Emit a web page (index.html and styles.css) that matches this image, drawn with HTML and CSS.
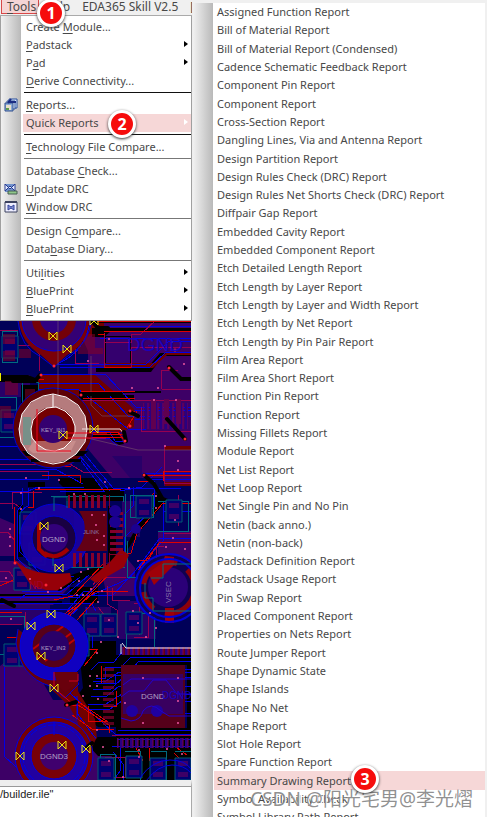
FILE: index.html
```html
<!DOCTYPE html>
<html lang="en">
<head>
<meta charset="utf-8">
<title>Quick Reports</title>
<meta name="viewport" content="width=device-width, initial-scale=1">
<link rel="stylesheet" href="styles.css">
</head>
<body>
<div class="app">
  <div class="workspace">
    <nav class="menubar">
      <button class="menubar-item open"><u>T</u>ools</button>
      <button class="menubar-item"><u>H</u>elp</button>
      <button class="menubar-item">EDA365 Skill V2.5</button>
      <span class="menubar-item">[ C</span>
    </nav>
    <div class="menu tools-menu">
      <button class="item">Create <u>M</u>odule...</button>
      <button class="item sub"><u>P</u>adstack</button>
      <button class="item sub">P<u>a</u>d</button>
      <button class="item"><u>D</u>erive Connectivity...</button>
      <hr>
      <button class="item"><svg class="icon" viewBox="0 0 14 14"><path d="M5 1h8v9H5z" fill="#dbe8fa" stroke="#294f9c"/><path d="M3 3h8v8H3z" fill="#eef4fd" stroke="#294f9c"/><path d="M1 5h8v8H1z" fill="#8ba9d6" stroke="#31518f"/><path d="M2 7h5v5H2z" fill="#e8e0c8"/><path d="M2 10h3v2H2z" fill="#5b9c4c"/><path d="M4 4h8M4 5l3-4" stroke="#1a2c83" stroke-width="2"/></svg><u>R</u>eports...</button>
      <button class="item sub selected">Quick Reports</button>
      <hr>
      <button class="item"><u>T</u>echnology File Compare...</button>
      <hr class="soft">
      <button class="item">Database <u>C</u>heck...</button>
      <button class="item"><svg class="icon" viewBox="0 0 14 14"><path d="M1 2h10v8H1z" fill="#6f90cc"/><path d="M1 2v7l5-5 5 5V2L6 7z" fill="#e4ebff" stroke="#283b90"/><path d="M4 9h9v3H4z" fill="#8fc78a" stroke="#475c52"/></svg><u>U</u>pdate DRC</button>
      <button class="item"><svg class="icon" viewBox="0 0 14 14"><path d="M1 2h12v10H1z" fill="#eef" stroke="#3c4260"/><path d="M1 2h12" stroke="#3c4260" stroke-width="2"/><path d="M4 5v5l3-2 3 2V5L7 7z" fill="#8491d4" stroke="#33439b"/></svg><u>W</u>indow DRC</button>
      <hr class="soft">
      <button class="item">Design C<u>o</u>mpare...</button>
      <button class="item">Data<u>b</u>ase Diary...</button>
      <hr class="soft">
      <button class="item sub">Uti<u>l</u>ities</button>
      <button class="item sub"><u>B</u>luePrint</button>
      <button class="item sub"><u>B</u>luePrint</button>
    </div>
    <svg class="board" viewBox="0 320 191 460" preserveAspectRatio="xMinYMin slice" role="img" aria-label="Circuit board">
      <defs>
        <g id="tie"><path d="M-4-4v8L4-4v8z" fill="none" stroke="#e8e010"/></g>
        <g id="part"><path d="M-8-11H8V11H-8z" fill="#000070" stroke="#005a70"/><path d="M-5-8H5v5H-5zM-5 3H5v5H-5z" fill="#3d0066"/></g>
        <pattern id="pins" width="6" height="13" patternUnits="userSpaceOnUse"><path d="M1 0h3v13H1z" fill="#84002c"/></pattern>
        <pattern id="pinsH" width="12" height="6" patternUnits="userSpaceOnUse"><path d="M0 1h12v3H0z" fill="#84002c"/></pattern>
        <pattern id="comb" width="5" height="9" patternUnits="userSpaceOnUse"><path d="M0 0h3v9H0z" fill="#2a0080"/><path d="M3 0v9" stroke="#80004c"/></pattern>
      </defs>
      <path fill="#000058" d="M0 320h191v460H0z"/>

      <g class="copper">
        <path fill="#3d0066" d="M75 320h116v165h-27v-8h-52L88 448V350zM0 517l14 6v32H0zM0 560h20l35 22h18l-20 22H0zM0 665l8-6 16 3 18 18 11 19h20l8 18 14 21 14 12 6 13v17H0zM158 530h33v32h-22l-11-9zM100 565l25-10 10 12v28h-28z"/>
        <path fill="#280068" d="M0 374h30v22H0zM112 455h30v22h-12zM122 500h18v36h-18zM0 604h50v20H0zM85 606h26v30H85zM118 600h38v38h-38z"/>
        <path fill="#700000" d="M38 374h57l39 34v18l-13 5-29-2-9 20-20 15H38zM165 445h26v4h-26zM165 481h26v4h-26zM84 322h20v10h-8l-8 4z"/>
        <path fill="#000" d="M90 320h101v2H90zM92 327h99v3h-80l-7 6H92zM104 335h27v28h-27v-24zM96 366h52l12-14h31v3h-28l-12 16H96zM0 374h28l10 4v3H0zM79 390h82v2H79zM79 394h55v6H79zM21 384h17v20H21zM84 431h34l6 12-5 1-11-7H84zM59 477h36l9 16H70l-11-11zM28 481h17v5H28zM18 504h5v52h-5zM66 487h58v13H66zM70 510h4v40h-4zM108 505h8v56h-8zM154 492l14 6-28 32-24 36-29 10-28 14-12-7 30-11 40-12 12-20zM70 586h28v16H70zM0 593h62v2H0zM0 600h62v3H0zM78 640h38v86H98L70 705l13-18zM116 654h75v10h-70v63h70v28H98l-12-13 12-6h18zM187 664h4v63h-4zM112 754h79v26h-79z"/>
        <path fill="#34006e" d="M106 336h24v27h-24z"/>
        <path fill="#700000" d="M105 362h48l13-10h25v2h-24l-14 13h-48zM64 676h14v14l17 28 2 20-18-15-10-18-19-18z"/>
      </g>

      <g fill="none" stroke="#0000e8" shape-rendering="crispEdges">
        <path d="M90 320q-4 31-33 43h89l23-23h22M38 373h67l31 33h55M38 382h60l30 33h63M38 388h40l50 40h18M60 366h90l16-15h25M135 409h56M135 418h32l20 20M74 430h35l6 10h8M78 437h31l8 8M82 450l31 37h68M76 453l28 37H60M0 445h32l6 10h42l30 35M0 478h48v-7M0 490h28l10-4h46M104 325h87M100 337h91M142 472h49M148 478h43"/>
        <path d="M28 487v18q-9 4-9 15v30l24 25h31M22 487v17l-5 6v47l20 20M120 490l22-4 20-20M164 510h27M154 480v26l-30 31v17l-37 40M163 500v40l-50 54H70M0 602h91l5 8M0 608h78l-24 21M93 590h-9l-17 20M0 596h80M90 595l40-18 30-40h31M137 577v20l10 7M164 600h27M20 598l6-5h41l22-19M22 590h40l18-14M133 486v19l-9 9v13M86 606v12l6 12v17M0 468h55l28 15M0 458h36l9 6"/>
        <path d="M191 650h-68l-9 11h-15l-8 8M191 656h-60l-10 10h-16v11H96M191 660h-52l-12 14h-12v8h-19M191 668h-60l-13 14M93 680h13l13-9h72M93 688h18l12-12h68M91 695h16l12-10h72M88 703h18l16-10h69M90 708h20l12-8h69M70 692l45 41h76M118 729h73M118 738h73M3 664h1l1 92 27 24M77 700v12l19 26M122 712h69M112 745h79M113 751l10 12v17M120 742v28l-7 10"/>
      </g>

      <g fill="none" stroke="#960050" shape-rendering="crispEdges">
        <path d="M104 332v34h27v-20h60M104 341h27v-8h10l16-15M75 346v16h24M80 399h111M161 388v-19h17M141 406v24h50M162 388h29M164 445v37h27M0 463h70l13 8h29M0 470h49M18 329H0M39 370v-17l-8-9H16M0 502h14l5 4M12 508v-17h30M164 532h27M164 545h-8v12M0 531h8l6 8v22M18 587h10l-4-12h-8M0 570h9l6 9M93 584l6-8h27M98 606l7 9h-15l-5 10M107 585v18l10 6v26M134 602h14v34h-14M139 606v28M0 623h22M25 611v20M112 734h79M105 756h20v20h-20M100 760v20M178 494v31M167 566h24M190 559h-18M0 580h31M112 587v12h18"/>
      </g>
      <g fill="none" stroke="#df0000" shape-rendering="crispEdges">
        <path d="M97 320h94M104 330h87M98 333h7M104 366h27M81 394v-4h54M83 397h52M36 378h8M60 436h64M69 431h49l6 8M37 458l20 7h14M42 474h38v8M35 488h86M33 490v16h-5M14 506v55M92 433h31M137 410l-10 17M135 410h-7M144 474h47M151 480h-13M163 480v-10h28M121 552h10l6-20 26-30h28M138 559h10l5-8M128 552l-25 25-29 29-33 24M112 570l-54 57M103 563l-30 32-19 4M60 620l36-30h32M66 631l31-34M77 666h-8v17M83 648h15l-14 17M66 704h12l31 20v8M72 714l20 14h22M101 665v17M136 747l7 13M149 747v13M177 747l10 7M174 752l8 8"/>
        <path d="M16 560l22 27M0 611h22M7 636h27l7 9M0 585l22-10M88 705v15h19M116 690v15h-12M77 700l31 21M80 660l-13 20M146 500l8-8M191 541h-31l-22 28"/>
      </g>
      <g fill="none" stroke="#006a80" shape-rendering="crispEdges">
        <path d="M2 330h15v31H2zM22 381v55h16v-55zM0 396h16v40H0M125 493v68M51 566h74M51 495h72v6M130 494h23v22h-23zM127 540v36h20M126 612h28v36h-28zM100 753h15v27h-15zM125 750h15v30M151 750h15v30M175 750h16v30M0 615h24v38H0M158 500h30v30h-30"/>
      </g>
      <use href="#part" x="10" y="346"/><use href="#part" x="9" y="420"/>
      <use href="#part" x="28" y="522"/><use href="#part" x="37" y="553"/><use href="#part" x="144" y="506"/><use href="#part" x="174" y="510"/><use href="#part" x="22" y="578"/><use href="#part" x="92" y="624"/><use href="#part" x="109" y="624"/><use href="#part" x="134" y="622"/><use href="#part" x="12" y="654"/><use href="#part" x="27" y="654"/><use href="#part" x="81" y="644"/><use href="#part" x="106" y="768"/><use href="#part" x="134" y="766"/><use href="#part" x="158" y="768"/><use href="#part" x="183" y="768"/>

      <g fill="#850022"><path d="M3 333h12v10H3zM3 350h12v10H3zM83 333h12v14h8v6H78v-11h5zM19 348h12v9H19zM5 380h13v14H5zM25 388h10v10H25zM0 405h11v12H0z" opacity=".55"/><path d="M143 402h45v26h-45z" fill="url(#comb)"/><path d="M151 398h5v30h-5zM164 398h5v25h-5zM176 398h5v25h-5z" fill="#600050"/></g>

      <path d="M19 320h70q-2 24-22 34l-13 12-13-12q-20-12-22-34z" fill="#7a0008"/><circle cx="54" cy="318" r="32" fill="#340074"/><circle cx="54" cy="318" r="22" fill="#740008"/><circle cx="54" cy="318" r="14" fill="#300080"/>
      <g fill="none" stroke="#0000d8"><circle cx="54" cy="318" r="32"/><path d="M18 320q2 26 23 36l13 10 15-12q18-10 23-34"/></g>
      <circle cx="53" cy="427" r="40" fill="#5d0005" stroke="#0000cc"/>
      <path d="M22 450h66l-5 5H26zM31 458h50v3H31z" fill="#000"/>
      <path d="M58 320v110M91 355v49l11 11h34M58 430l80 19h53" fill="none" stroke="#77516c" opacity=".6"/>
      <circle cx="53" cy="428" r="22" fill="#740002"/>
      <circle cx="53" cy="428" r="28" fill="none" stroke="#b57b7d" stroke-width="12"/>
      <path d="M23 416h8v28h-8z" fill="#779089"/><path d="M28 448l6-8h42l-6 12H33z" fill="#d69a96" opacity=".6"/>
      <path d="M19 428l3-15 9-12 12-6 10-2 13 3 12 8 7 11 2 13-2 13-9 12-12 8-11 2-13-3-12-8-7-11zM31 428l2-9 6-7 8-5 9-1 9 4 7 7 3 8v6l-4 9-7 7-9 3-9-1-8-5-6-7zM53 393v13" fill="none" stroke="#fff"/>
      <circle cx="53" cy="428" r="14" fill="#350070"/><path d="M37 408v42h34M66 432h41M66 437h40" fill="none" stroke="#f00018"/>
      <path d="M82 428h38l5 6" fill="none" stroke="#f0dddd"/>

      <path d="M14 558q16 18 56 14l2 8-14 9H46L30 583zM121 548l8 6-5 12-28 16-6-4 20-17z" fill="#960008"/>
      <circle cx="54" cy="537" r="22" fill="#190042"/><path d="M39 522v26l8 8M44 552q12 8 24-4M40 535h8" fill="none" stroke="#a10000" stroke-width="4"/><circle cx="54" cy="537" r="14" fill="#32007a"/><circle cx="54" cy="537" r="28" fill="none" stroke="#1b00a2" stroke-width="12" opacity=".92"/><g fill="none" stroke="#0000d8"><circle cx="54" cy="537" r="34"/><circle cx="54" cy="537" r="22"/></g>
      <path d="M79 510h28v40H76q16-20 3-40z" fill="#630015"/>
      <path d="M68 494h42v13H68zM72 552h38v14H72z" fill="url(#pins)"/><path d="M110 511h13v43h-13z" fill="url(#pinsH)"/>
      <path d="M54 510v-14h13v11M53 565v-8" stroke="#006a80" fill="none"/>
      <g fill="#1b0090"><circle cx="115" cy="510" r="6"/><circle cx="115" cy="521" r="6"/><circle cx="136" cy="528" r="5"/></g>

      <circle cx="169" cy="587" r="33" fill="#100050"/><circle cx="169" cy="587" r="26" fill="none" stroke="#8c000b" stroke-width="6" stroke-dasharray="45 12 20 8"/><circle cx="168" cy="586" r="20" fill="#2b0078"/><path d="M148 572l14-10 3-7 9 1v8l-20 20zM165 607h9v15h-9z" fill="#a00008"/><g fill="none" stroke="#0000d8" stroke-width="2"><circle cx="169" cy="587" r="34"/><circle cx="169" cy="587" r="29"/></g>
      <path d="M145 582v15h8v13h38M151 577h12v-14h28" stroke="#007080" fill="none"/>

      <path d="M18 628l-2 14q4 34 34 43l15 12 14-14-8-12" fill="#65000b" stroke="#0000d8"/><circle cx="54" cy="645" r="22" fill="#56001a"/><path d="M34 660l40-30M33 648l36-27M45 660l36-26" stroke="#c00000" stroke-width="2"/><circle cx="54" cy="645" r="15" fill="#2a0068"/><circle cx="54" cy="645" r="28" fill="none" stroke="#1000c0" stroke-width="12"/><g fill="none" stroke="#0000e8"><circle cx="54" cy="645" r="34"/><circle cx="54" cy="645" r="22"/></g>
      <path d="M54 671h24v11l-13 9-7-6" fill="#69000c"/><path d="M69 680h9v-7M54 671v16l20 17" fill="none" stroke="#d00020"/>

      <circle cx="54" cy="755" r="39" fill="#740004"/><path d="M78 718l18 20-7 14-12-5z" fill="#740004"/><circle cx="54" cy="755" r="34" fill="#2200a0"/><circle cx="54" cy="755" r="23" fill="#780007"/><circle cx="54" cy="755" r="14" fill="#40006e"/><g fill="none" stroke="#0000e5"><circle cx="54" cy="755" r="39"/><circle cx="54" cy="755" r="34"/><circle cx="54" cy="755" r="31" stroke-dasharray="8 2"/><circle cx="54" cy="755" r="23"/><path d="M54 721v13M77 695v24"/></g>

      <path d="M121 664h64v63h-64z" fill="#55001a"/><path d="M123 673h60v40h-60z" fill="#39005f"/><circle cx="132" cy="710" r="6" fill="#2000a0"/><circle cx="157" cy="710" r="6" fill="#2000a0"/><path d="M121 696l8-6h15l9-11h13l11 14h14M121 717l10 3q10-1 12-10 8-10 18 0l8 5h22M123 684l8-6h60" fill="none" stroke="#2200cf"/>
      <path d="M122 646h69v8h-69z" fill="#650012"/><path d="M122 646h69v8h-69zM117 737h74v10h-74z" fill="url(#comb)"/><path d="M103 664h11v63h-11z" fill="url(#pinsH)" opacity=".7"/>
      <path d="M121 643v10M122 642l4 5h65" fill="none" stroke="#eee"/>
      <path d="M140 777q12-18 30-18 15 0 21 9M146 780q12-16 26-16 12 0 19 8" fill="none" stroke="#0000e0"/>

      <g fill="none" stroke="#000" stroke-width="4" stroke-linecap="round"><path d="M13 380h22l5-6M92 320l6 7h10M169 366l12 12h10M81 393h40M130 411l8 4M167 418l18 20M124 431l2 9M144 474l10 9 8 14M2 599l12 6M66 704l10-3M87 746l5-4"/></g>
      <path d="M54 365h0M175 349h0M41 374h0M81 394h0M130 410h0M130 425h0M125 440h0M144 474h0M185 438h0M169 367h0M15 562h0M46 584h0M67 704h0" class="vias"/>
      <path d="M109 338h0M88 360h0M172 341h0M184 363h0M132 387h0M158 387h0M154 399h0M176 399h0M165 445h0M178 460h0M178 469h0M26 477h0M59 479h0M105 481h0M21 492h0M39 487h0M74 493h0M85 493h0M129 487h0M156 495h0M156 507h0M175 519h0M21 508h0M10 528h0M10 536h0M10 545h0M92 514h0M104 514h0M96 524h0M104 535h0M97 539h0M104 544h0M173 537h0M185 548h0M166 546h0M138 560h0M88 568h0M81 571h0M79 580h0M30 578h0M6 577h0M48 591h0M61 587h0M77 594h0M83 594h0M102 590h0M91 588h0M98 601h0M11 618h0M109 619h0M133 610h0M150 612h0M138 622h0M156 627h0M101 641h0M118 636h0M146 636h0M97 652h0M90 675h0M97 675h0M97 685h0M90 685h0M83 695h0M98 698h0M143 677h0M178 677h0M125 702h0M178 700h0M143 722h0M178 722h0M97 729h0M103 746h0M109 760h0M139 749h0M139 756h0M167 748h0M182 753h0M123 776h0" class="dots"/>

      <g class="labels">
        <text x="127" y="350" class="net">DGND</text><text x="41" y="431">KEY_IN1</text><text x="42" y="541" class="mid">DGND</text><text x="83" y="533" class="dim">JLINK</text><text x="29" y="588" class="rednet">ND</text><text x="41" y="649">KEY_IN3</text><text x="141" y="698" class="mid">DGND</text><text x="162" y="698" class="net small">DGND</text><text x="40" y="758" class="mid">DGND3</text><text transform="translate(171 602) rotate(-90)" class="dim mid">VSEC</text>
      </g>
      <use href="#tie" x="53" y="335"/><use href="#tie" x="67" y="348"/><use href="#tie" x="94" y="320"/><use href="#tie" x="63" y="434"/><use href="#tie" x="94" y="428"/><use href="#tie" x="44" y="525"/><use href="#tie" x="59" y="567"/><use href="#tie" x="51" y="613"/><use href="#tie" x="31" y="625"/><use href="#tie" x="41" y="655"/><use href="#tie" x="54" y="687"/><use href="#tie" x="62" y="744"/><use href="#tie" x="86" y="748"/><use href="#tie" x="20" y="755"/><path d="M0 372v8" stroke="#ee0" stroke-width="2"/>
    </svg>
    <div class="console">/builder.ile"</div>
    <span class="callout one">1</span>
    <span class="callout two">2</span>
  </div>
  <div class="reports">
    <div class="menu report-menu">
      <button class="item">Assigned Function Report</button>
      <button class="item">Bill of Material Report</button>
      <button class="item">Bill of Material Report (Condensed)</button>
      <button class="item">Cadence Schematic Feedback Report</button>
      <button class="item">Component Pin Report</button>
      <button class="item">Component Report</button>
      <button class="item">Cross-Section Report</button>
      <button class="item">Dangling Lines, Via and Antenna Report</button>
      <button class="item">Design Partition Report</button>
      <button class="item">Design Rules Check (DRC) Report</button>
      <button class="item">Design Rules Net Shorts Check (DRC) Report</button>
      <button class="item">Diffpair Gap Report</button>
      <button class="item">Embedded Cavity Report</button>
      <button class="item">Embedded Component Report</button>
      <button class="item">Etch Detailed Length Report</button>
      <button class="item">Etch Length by Layer Report</button>
      <button class="item">Etch Length by Layer and Width Report</button>
      <button class="item">Etch Length by Net Report</button>
      <button class="item">Etch Length by Pin Pair Report</button>
      <button class="item">Film Area Report</button>
      <button class="item">Film Area Short Report</button>
      <button class="item">Function Pin Report</button>
      <button class="item">Function Report</button>
      <button class="item">Missing Fillets Report</button>
      <button class="item">Module Report</button>
      <button class="item">Net List Report</button>
      <button class="item">Net Loop Report</button>
      <button class="item">Net Single Pin and No Pin</button>
      <button class="item">Netin (back anno.)</button>
      <button class="item">Netin (non-back)</button>
      <button class="item">Padstack Definition Report</button>
      <button class="item">Padstack Usage Report</button>
      <button class="item">Pin Swap Report</button>
      <button class="item">Placed Component Report</button>
      <button class="item">Properties on Nets Report</button>
      <button class="item">Route Jumper Report</button>
      <button class="item">Shape Dynamic State</button>
      <button class="item">Shape Islands</button>
      <button class="item">Shape No Net</button>
      <button class="item">Shape Report</button>
      <button class="item">Slot Hole Report</button>
      <button class="item">Spare Function Report</button>
      <button class="item selected">Summary Drawing Report<span class="callout three">3</span></button>
      <button class="item">Symbol Availability Check</button>
      <button class="item">Symbol Library Path Report</button>
    </div>
  </div>
  <div class="watermark">CSDN @阳光宅男@李光熠</div>
</div>
</body>
</html>
```
FILE: styles.css
```css
* { box-sizing: border-box; }
body {
  margin: 0;
  overflow: hidden;
  font-family: "Noto Sans", "Noto Sans CJK SC", sans-serif;
  font-size: 11px;
  color: #484848;
  background: #f0f0f0;
}
button { font: inherit; color: inherit; border: 0; background: none; padding: 0; margin: 0; text-align: left; }
u { text-underline-offset: 2px; }

.app {
  position: relative;
  display: grid;
  grid-template-columns: 192px 1fr;
  height: 100vh;
  overflow: hidden;
}
.workspace { position: relative; display: flex; flex-direction: column; min-width: 0; min-height: 0; }

.menubar {
  display: flex;
  height: 16px;
  overflow: hidden;
  background: #f0f0f0;
  border-bottom: 1px solid #aaa;
  font-size: 12px;
}
.menubar-item { flex: none; height: 14px; line-height: 14px; margin-right: 12px; white-space: pre; }
.menubar-item.open { width: 38px; margin: 0 5px 0 1px; padding-left: 5px; line-height: 13px; background: #f5d5d5; border: 1px solid #d94848; border-top: 0; }

.menu {
  background: linear-gradient(90deg, #f1f1f1, #b9b9b9 20px, #fff 20px);
}
.item { position: relative; display: block; width: 100%; padding: 0; line-height: 18px; white-space: nowrap; }
.tools-menu { flex: none; padding: 2px 0 2px 22px; border: solid #a0a0a0; border-width: 0 1px 1px; }
.tools-menu .item { height: 18px; padding-left: 3px; }
.tools-menu hr { height: 2px; margin: 2px 0 2px 1px; border: 0; border-top: 1px solid #111; }
.tools-menu hr.soft { border-top-color: #777; }
.selected, .tools-menu .selected { background: #f6d7d7; }
.icon { position: absolute; left: -19px; top: 2px; width: 14px; height: 14px; }
.sub::after {
  content: "";
  position: absolute;
  right: 3px;
  top: 5px;
  border: solid transparent;
  border-width: 3px 0 3px 4px;
  border-left-color: #000;
}
.sub.selected::after { border-left-color: #fff; }

.board { display: block; flex: 1 1 0; width: 191px; min-height: 0; }
.dots { fill: none; stroke: #ec55a0; stroke-width: 2; stroke-linecap: round; }
.vias { fill: none; stroke: #ff2438; stroke-width: 3; stroke-linecap: round; }
.labels { font-family: "Liberation Sans", sans-serif; font-size: 6px; fill: #b3a0c4; }
.labels .mid { font-size: 8px; }
.labels .dim { fill: #8a75a8; }
.labels .net { font-size: 19px; fill: #1900bd; }
.labels .net.small { font-size: 10px; }
.labels .rednet { font-size: 10px; fill: #a00030; }
.console {
  flex: none;
  height: 37px;
  padding-top: 1px;
  border-top: 6px solid #eee;
  border-right: 1px solid #aaa;
  background: #fff;
  box-shadow: inset 0 1px #999;
  font-family: "Liberation Sans", sans-serif;
  line-height: 14px;
  color: #222;
}

.reports { min-width: 0; min-height: 0; padding: 3px 2px 0 0; }
.report-menu {
  display: grid;
  grid-auto-rows: 18px 18px 19px 18px 18px 19px 18px 18px 19px 18px;
  padding-left: 21px;
  border-left: 1px solid #eee;
}
.report-menu .item { padding-left: 3px; }

.callout {
  position: absolute;
  z-index: 2;
  width: 28px;
  height: 28px;
  border: 3px solid #fff;
  border-radius: 50%;
  background: #f60c0c;
  box-shadow: 0 1px 3px #333;
  color: #fff;
  font: bold 16px/22px "Noto Sans", sans-serif;
  text-align: center;
}
.one { left: 37px; top: -1px; }
.two { left: 108px; top: 110px; }
.three { left: 137px; top: -6px; }
.watermark {
  position: absolute;
  right: 14px;
  bottom: 4px;
  font-size: 19px;
  line-height: 28px;
  color: rgba(125, 125, 125, .85);
  text-shadow: 1px 1px #fff;
  white-space: nowrap;
  pointer-events: none;
}
```
